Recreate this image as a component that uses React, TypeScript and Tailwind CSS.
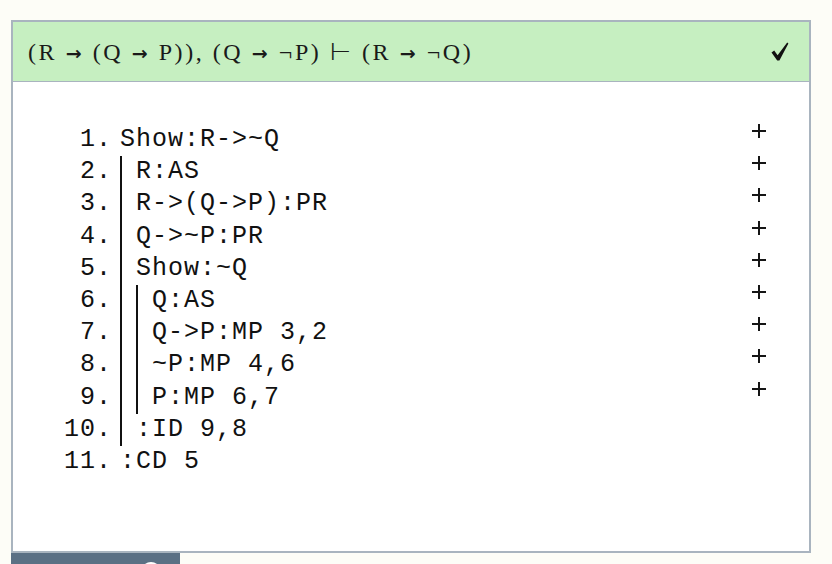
import React from "react";

type Row = { n: number; level: number; text: string; plus: boolean };

const rows: Row[] = [
  { n: 1, level: 0, text: "Show:R->~Q", plus: true },
  { n: 2, level: 1, text: "R:AS", plus: true },
  { n: 3, level: 1, text: "R->(Q->P):PR", plus: true },
  { n: 4, level: 1, text: "Q->~P:PR", plus: true },
  { n: 5, level: 1, text: "Show:~Q", plus: true },
  { n: 6, level: 2, text: "Q:AS", plus: true },
  { n: 7, level: 2, text: "Q->P:MP 3,2", plus: true },
  { n: 8, level: 2, text: "~P:MP 4,6", plus: true },
  { n: 9, level: 2, text: "P:MP 6,7", plus: true },
  { n: 10, level: 1, text: ":ID 9,8", plus: false },
  { n: 11, level: 0, text: ":CD 5", plus: false },
];

function Plus() {
  return (
    <svg width="14" height="14" viewBox="0 0 14 14" className="block">
      <line x1="0" y1="7" x2="14" y2="7" stroke="#151515" strokeWidth="2" />
      <line x1="7" y1="0" x2="7" y2="14" stroke="#151515" strokeWidth="2" />
    </svg>
  );
}

function Check() {
  return (
    <svg width="18" height="19" viewBox="0 0 18 19" className="block">
      <path
        d="M0.5 10.5 L3.2 8.6 L6.6 13.2 L16.2 0.6 L17.4 1.4 L8.4 18.4 L6.2 18.4 Z"
        fill="#111"
      />
    </svg>
  );
}

function Arr() {
  return (
    <span
      className="font-bold text-[19px]"
      style={{ fontFamily: '"DejaVu Sans", sans-serif' }}
    >
      →
    </span>
  );
}

function Content({ level, text }: { level: number; text: string }) {
  const t = <span className="whitespace-pre">{text}</span>;
  if (level === 0) return <div className="h-full">{t}</div>;
  if (level === 1)
    return <div className="h-full border-l-2 border-[#111] pl-[14px]">{t}</div>;
  return (
    <div className="h-full border-l-2 border-[#111] pl-[14px]">
      <div className="h-full border-l-2 border-[#111] pl-[14px]">{t}</div>
    </div>
  );
}

export default function App() {
  return (
    <div className="w-[832px] h-[564px] overflow-hidden bg-[#fdfdf7] pt-[20px] pl-[11px]">
      <div className="w-[800px] h-[533px] border-2 border-[#a9b4bf] bg-white flex flex-col">
        <div className="h-[60px] bg-[#c6efc1] border-b border-[#a9b4bf] flex items-center justify-between pl-[15px] pr-[20px]">
          <span
            className="text-[24px] text-[#1a1a1a] whitespace-pre tracking-[2.55px]"
            style={{ fontFamily: '"Liberation Serif", serif' }}
          >
            (R <Arr /> (Q <Arr /> P)), (Q <Arr /> ¬P) ⊢ (R <Arr /> ¬Q)
          </span>
          <Check />
        </div>
        <div
          className="flex-1 pt-[42px] pl-[51px] pr-[43px] text-[25px] tracking-[1px] text-[#111]"
          style={{ fontFamily: '"Liberation Mono", "DejaVu Sans Mono", monospace' }}
        >
          {rows.map((r) => (
            <div key={r.n} className="flex h-[32.2px] leading-[32.2px]">
              <div className="w-[48px] text-right shrink-0">{r.n}.</div>
              <div className="ml-[8px] flex-1 h-full">
                <Content level={r.level} text={r.text} />
              </div>
              <div className="w-[14px] shrink-0">{r.plus ? <Plus /> : null}</div>
            </div>
          ))}
        </div>
      </div>
      <div className="w-[169px] h-[20px] bg-[#5b7084] flex">
        <div className="ml-[130px] mt-[9px] w-[20px] h-[20px] rounded-full bg-white" />
      </div>
    </div>
  );
}
